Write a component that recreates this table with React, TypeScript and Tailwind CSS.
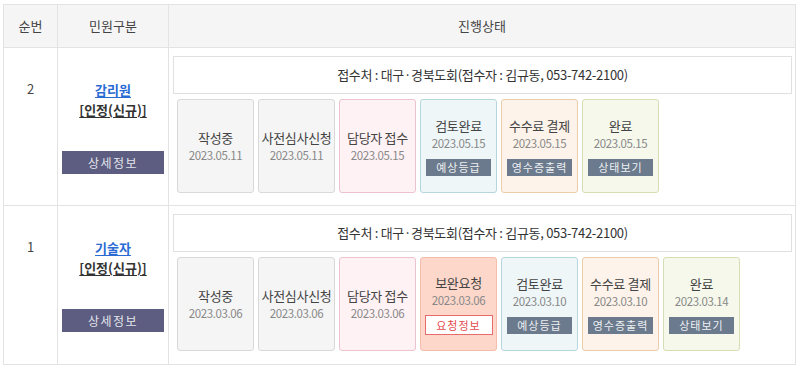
import React from "react";

type Step = {
  title: string;
  date: string;
  tone: "gray" | "pink" | "blue" | "orange" | "green" | "salmon";
  button?: string;
  request?: boolean;
};

const toneClass: Record<Step["tone"], string> = {
  gray: "bg-[#f5f5f5] border-[#d9d9d9]",
  pink: "bg-[#fff2f5] border-[#eec3ce]",
  blue: "bg-[#eff6f8] border-[#b6d6dd]",
  orange: "bg-[#fdf3ea] border-[#eccda9]",
  green: "bg-[#f6f8ec] border-[#d5ddb3]",
  salmon: "bg-[#fdd7ca] border-[#f3bcab]",
};

const rows: { no: number; kind: string; steps: Step[] }[] = [
  {
    no: 2,
    kind: "감리원",
    steps: [
      { title: "작성중", date: "2023.05.11", tone: "gray" },
      { title: "사전심사신청", date: "2023.05.11", tone: "gray" },
      { title: "담당자 접수", date: "2023.05.15", tone: "pink" },
      { title: "검토완료", date: "2023.05.15", tone: "blue", button: "예상등급" },
      { title: "수수료 결제", date: "2023.05.15", tone: "orange", button: "영수증출력" },
      { title: "완료", date: "2023.05.15", tone: "green", button: "상태보기" },
    ],
  },
  {
    no: 1,
    kind: "기술자",
    steps: [
      { title: "작성중", date: "2023.03.06", tone: "gray" },
      { title: "사전심사신청", date: "2023.03.06", tone: "gray" },
      { title: "담당자 접수", date: "2023.03.06", tone: "pink" },
      { title: "보완요청", date: "2023.03.06", tone: "salmon", button: "요청정보", request: true },
      { title: "검토완료", date: "2023.03.10", tone: "blue", button: "예상등급" },
      { title: "수수료 결제", date: "2023.03.10", tone: "orange", button: "영수증출력" },
      { title: "완료", date: "2023.03.14", tone: "green", button: "상태보기" },
    ],
  },
];

function StepCard({ step }: { step: Step }) {
  return (
    <div
      className={`w-[77px] h-[94px] border rounded-[3px] flex flex-col items-center justify-center ${toneClass[step.tone]}`}
    >
      <div className="text-[13px] leading-[18px] text-[#444] tracking-[-0.3px]">{step.title}</div>
      <div className="text-[11.5px] leading-[17px] text-[#888] tracking-[-0.4px]">{step.date}</div>
      {step.button &&
        (step.request ? (
          <div className="mt-[6px] w-[68px] h-[20px] bg-white border border-[#e86a6a] text-[#e5494d] text-[11px] leading-[18px] text-center tracking-[1px]">
            {step.button}
          </div>
        ) : (
          <div className="mt-[7px] w-[65px] h-[17px] bg-[#6b7a8c] text-[#eef0f3] text-[11px] leading-[17px] text-center tracking-[1px]">
            {step.button}
          </div>
        ))}
    </div>
  );
}

export default function App() {
  return (
    <div
      className="pt-1 pl-[3px] bg-white"
      style={{ fontFamily: '"Noto Sans CJK KR", "Noto Sans", sans-serif' }}
    >
      <div className="w-[793px] border border-[#e3e3e3]">
        {/* header */}
        <div className="flex h-[43px] bg-[#f5f5f5] border-b border-[#e3e3e3] text-[13px] text-[#444]">
          <div className="w-[54px] border-r border-[#e3e3e3] flex items-center justify-center">순번</div>
          <div className="w-[111px] border-r border-[#e3e3e3] flex items-center justify-center">민원구분</div>
          <div className="flex-1 flex items-center justify-center">진행상태</div>
        </div>

        {rows.map((row, i) => (
          <div
            key={row.no}
            className={`flex h-[158px] ${i < rows.length - 1 ? "border-b border-[#e3e3e3]" : ""}`}
          >
            <div className="w-[54px] border-r border-[#e3e3e3] flex justify-center pt-[31px] text-[13px] text-[#444]">
              {row.no}
            </div>
            <div className="w-[111px] border-r border-[#e3e3e3] flex flex-col items-center pt-[32px]">
              <a className="text-[13px] leading-[20px] font-bold text-[#2a6bd3] underline underline-offset-2">
                {row.kind}
              </a>
              <div className="text-[13px] leading-[20px] font-bold text-[#333] underline underline-offset-2">
                [인정(신규)]
              </div>
              <div className="mt-[31px] w-[102px] h-[23px] bg-[#5c5d80] text-[#e4e4ec] text-[12px] leading-[23px] text-center tracking-[1.5px]">
                상세정보
              </div>
            </div>
            <div className="flex-1 pt-[8px] pl-[4px] pr-[3px]">
              <div className="h-[38px] border border-[#e0e0e0] flex items-center justify-center text-[13px] text-[#333] tracking-[-0.3px]">
                접수처 : 대구·경북도회(접수자 : 김규동, 053-742-2100)
              </div>
              <div className="flex gap-[4px] mt-[5px] pl-[4px]">
                {row.steps.map((s) => (
                  <StepCard key={s.title} step={s} />
                ))}
              </div>
            </div>
          </div>
        ))}
      </div>
    </div>
  );
}
